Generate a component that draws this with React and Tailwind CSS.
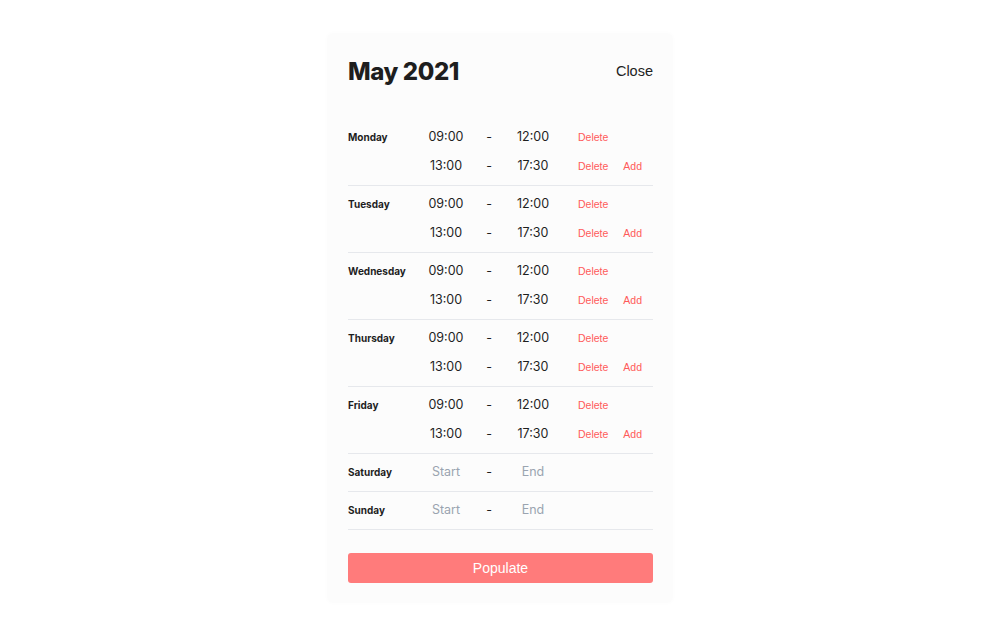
import React from "react";

const days = [
  { name: "Monday", slots: [["09:00", "12:00"], ["13:00", "17:30"]] },
  { name: "Tuesday", slots: [["09:00", "12:00"], ["13:00", "17:30"]] },
  { name: "Wednesday", slots: [["09:00", "12:00"], ["13:00", "17:30"]] },
  { name: "Thursday", slots: [["09:00", "12:00"], ["13:00", "17:30"]] },
  { name: "Friday", slots: [["09:00", "12:00"], ["13:00", "17:30"]] },
  { name: "Saturday", slots: [] },
  { name: "Sunday", slots: [] },
];

function Row({ start, end, empty, last }) {
  return (
    <div className="flex h-[29px] items-center">
      <div className="w-[60px] text-center text-[12.5px] text-[#1f1f1f] font-['Inter',sans-serif]">
        {empty ? <span className="text-[#9aa4b0]">Start</span> : start}
      </div>
      <div className="w-[26px] text-center text-[12.5px] text-[#1f1f1f] font-['Inter',sans-serif]">-</div>
      <div className="w-[62px] text-center text-[12.5px] text-[#1f1f1f] font-['Inter',sans-serif]">
        {empty ? <span className="text-[#9aa4b0]">End</span> : end}
      </div>
      {!empty && (
        <div className="ml-[14px] flex items-center gap-[15px] text-[10.5px] text-[#ff5a5a] font-['Liberation_Sans',Arial,sans-serif]">
          <span>Delete</span>
          {last && <span>Add</span>}
        </div>
      )}
    </div>
  );
}

export default function App() {
  return (
    <div className="min-h-[636px] w-full bg-white flex justify-center pt-[33px]">
      <div className="w-[346px] bg-[#fcfcfc] rounded-md shadow-[0_0_6px_rgba(0,0,0,0.015)] pl-[21px] pr-5 pt-5 pb-[20px] flex flex-col self-start">
        <div className="flex items-center justify-between h-[37px]">
          <h1 className="text-[24px] font-extrabold text-[#1e1e1e] tracking-[-0.4px] font-['Inter',sans-serif]">May 2021</h1>
          <button className="text-[14.5px] text-[#222] font-['Liberation_Sans',Arial,sans-serif]">Close</button>
        </div>
        <div className="mt-[29px] flex flex-col">
          {days.map((d) => (
            <div key={d.name} className="flex py-1 border-b border-[#e6e8ec]">
              <div className="w-[68px] h-[29px] flex items-center text-[10px] font-bold text-[#1e1e1e] font-['Inter',sans-serif]">
                {d.name}
              </div>
              <div className="flex flex-col">
                {d.slots.length === 0 ? (
                  <Row empty />
                ) : (
                  d.slots.map((s, i) => (
                    <Row key={i} start={s[0]} end={s[1]} last={i === d.slots.length - 1} />
                  ))
                )}
              </div>
            </div>
          ))}
        </div>
        <button className="mt-[23px] h-[30px] w-full shrink-0 rounded-[3px] bg-[#ff7b7b] text-white text-[14px] font-['Liberation_Sans',Arial,sans-serif]">
          Populate
        </button>
      </div>
    </div>
  );
}
